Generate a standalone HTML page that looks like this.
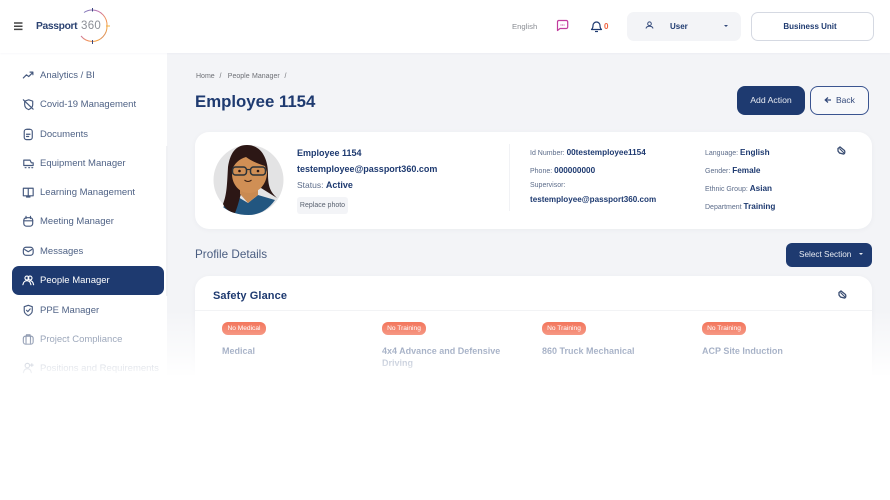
<!DOCTYPE html>
<html lang="en"><head><meta charset="utf-8"><title>Employee 1154</title>
<style>
*{box-sizing:border-box}
html,body{margin:0;padding:0;width:890px;height:500px;overflow:hidden;background:#fff}
body{font-family:"Liberation Sans",sans-serif;position:relative;color:#1e3a70}
.a{position:absolute;white-space:nowrap}
.nav{position:absolute;left:40px;font-size:9.5px;color:#4f6285;white-space:nowrap;line-height:14px}
.ic{position:absolute;left:22px;width:12.5px;height:12.5px;fill:none;stroke:#46597e;stroke-width:1.3;stroke-linecap:round;stroke-linejoin:round}
.card{position:absolute;background:#fff;border-radius:14px;box-shadow:0 1px 6px rgba(30,40,80,.04)}
.b{font-weight:bold;color:#1e3a70}
.l{color:#5c6c8a;font-size:7px;line-height:12px}
.l b{color:#1e3a70;font-size:8.2px}
.pill{position:absolute;top:322px;height:13px;background:#f05838;border-radius:6px;color:#fff;font-size:6.6px;line-height:13px;text-align:center}
.t{position:absolute;top:346px;font-size:9px;font-weight:bold;color:#1e3a70;white-space:nowrap;line-height:11.5px}
</style></head><body>

<div class="a" style="left:167px;top:53px;width:723px;height:330px;background:#f3f4f7"></div>
<div class="a" style="left:0;top:0;width:890px;height:53px;background:#fff;box-shadow:0 1px 2px rgba(30,40,80,.03)"></div>
<div class="a" style="left:166px;top:146px;width:2px;height:150px;background:#f0f1f4"></div>

<!-- header -->
<svg class="a" style="left:14px;top:22px" width="9" height="9"><path d="M0 1h8.500M0 4.200h8.500M0 7.400h8.500" stroke="#444" stroke-width="1.500"/></svg>
<div class="a" style="left:36px;top:19px;font-size:10.300px;line-height:15px;font-weight:bold;color:#2c4372;letter-spacing:-.35px">Passport</div>
<div class="a" style="left:81px;top:18px;font-size:11.500px;line-height:16px;color:#8c8f96;letter-spacing:.3px">360</div>
<svg class="a" style="left:78px;top:8px" width="32" height="37" fill="none">
<defs><linearGradient id="g" x1="0" y1="0" x2="1" y2="1"><stop offset="0" stop-color="#6b7fc0"/><stop offset=".35" stop-color="#c070b0"/><stop offset=".6" stop-color="#f09060"/><stop offset=".8" stop-color="#f0a040"/><stop offset="1" stop-color="#a060b0"/></linearGradient></defs>
<path d="M6 4.500A14.500 14.500 0 0 1 14.500 2A15 15 0 0 1 29 18A15 15 0 0 1 14.500 33.500A15 15 0 0 1 3 28" stroke="url(#g)" stroke-width="1"/>
<path d="M14.500 0v3.500M14.500 32v4" stroke="#3a4a80" stroke-width="1"/><path d="M28 18h4" stroke="#f0b040" stroke-width="1"/>
</svg>

<div class="a" style="left:512px;top:20px;font-size:7.700px;line-height:13px;color:#8a8d93">English</div>
<svg class="a" style="left:556px;top:19px" width="13" height="13" fill="none"><path d="M2.500 1.500h8a1.500 1.500 0 0 1 1.200 1.500v5a1.500 1.500 0 0 1-1.500 1.500H4L1.500 11.500V3a1.500 1.500 0 0 1 1-1.500z" stroke="#c23d9e" stroke-width="1.200" stroke-linejoin="round"/><path d="M4.500 6h4" stroke="#c23d9e" stroke-width="1" stroke-dasharray="1 .6"/></svg>
<svg class="a" style="left:590px;top:20px" width="13" height="13" fill="none"><path d="M1.500 9.500c1.200-1 1.500-2 1.500-4a3.500 3.500 0 0 1 7 0c0 2 .3 3 1.500 4z" stroke="#1e3a70" stroke-width="1.200" stroke-linejoin="round"/><path d="M5 11.500h3" stroke="#1e3a70" stroke-width="1.200"/></svg>
<div class="a" style="left:604px;top:20px;font-size:8px;line-height:13px;font-weight:bold;color:#f0603c">0</div>
<div class="a" style="left:627px;top:12px;width:114px;height:29px;background:#f3f4f7;border-radius:7px"></div>
<svg class="a" style="left:645px;top:21px" width="9" height="9" fill="none"><circle cx="4.500" cy="2.700" r="1.800" stroke="#33497a" stroke-width="1"/><path d="M1 7.500c.3-1.600 1.500-2.200 3.500-2.200s3.200.6 3.500 2.200" stroke="#33497a" stroke-width="1"/></svg>
<div class="a" style="left:670px;top:20px;font-size:8px;line-height:13px;font-weight:bold;color:#1e3a70">User</div>
<div class="a" style="left:723.500px;top:25px;border:2px solid transparent;border-top:2.500px solid #33497a;border-bottom:0"></div>
<div class="a" style="left:751px;top:12px;width:123px;height:29px;background:#fff;border:1px solid #d5d9e2;border-radius:7px;text-align:center;font-size:8px;line-height:27px;font-weight:bold;color:#1e3a70;padding-right:5px">Business Unit</div>

<!-- breadcrumb + title -->
<div class="a" style="left:196px;top:71px;font-size:7px;line-height:11px;color:#6d6f75;word-spacing:.5px">Home &nbsp;/&nbsp;&thinsp; People Manager &nbsp;/</div>
<div class="a" style="left:195px;top:91px;font-size:16.800px;line-height:21px;font-weight:bold;color:#1e3a70">Employee 1154</div>
<div class="a" style="left:737px;top:86px;width:68px;height:29px;background:#1e3a70;border-radius:8px;color:#e8ebf2;font-size:8.700px;line-height:29px;text-align:center">Add Action</div>
<div class="a" style="left:810px;top:86px;width:59px;height:29px;border:1px solid #3a5490;border-radius:8px;background:#f7f8fa;color:#33497a;font-size:8.500px;line-height:27px;padding-left:25px">Back</div>
<svg class="a" style="left:824px;top:96px" width="8" height="8" fill="none"><path d="M7 4H1.500M4 1.500L1.200 4 4 6.500" stroke="#33497a" stroke-width="1.200"/></svg>

<!-- profile card -->
<div class="card" style="left:195px;top:132px;width:677px;height:97px"></div>
<svg class="a" style="left:213px;top:144px" width="72" height="72" viewBox="0 0 72 72">
<circle cx="35.500" cy="36" r="35" fill="#e3e3e4"/>
<path d="M10 63L25 53L35 59L45 51L62 56C55 66 46 71 35.500 71C25 71 16 68 10 63Z" fill="#225680"/>
<path d="M34 1C22 1 17 10 15 23C14 40 14 50 10 60C12 65 17 68 22 69C25 62 26 56 28 50L48 44L64 54C58 48 55 44 55 30C55 14 48 1 34 1Z" fill="#2c1715"/>
<path d="M27 40L27 50L35 59L45 51L45 40Z" fill="#c98a52"/>
<path d="M19 26C21 20 26 15 33 13C38 17 46 20 52 22L54 28C54 40 46 49 36 49C26 49 19 40 19 30Z" fill="#d08f55"/>
<rect x="19.500" y="23" width="14" height="8" rx="3" fill="none" stroke="#2a3238" stroke-width="1.500"/>
<rect x="37.500" y="23" width="15" height="8" rx="3" fill="none" stroke="#2a3238" stroke-width="1.500"/>
<path d="M33.500 25.500h4" stroke="#2a3238" stroke-width="1.200"/>
<circle cx="26.500" cy="27" r="1.300" fill="#2c1715"/><circle cx="45" cy="27" r="1.300" fill="#2c1715"/>
<path d="M31.500 36c2 2 5 2 7 0" fill="none" stroke="#3a2015" stroke-width="1"/>
</svg>
<div class="a b" style="left:297px;top:147px;font-size:9px;line-height:13px">Employee 1154</div>
<div class="a b" style="left:297px;top:163px;font-size:9px;line-height:13px">testemployee@passport360.com</div>
<div class="a" style="left:297px;top:179px;font-size:8.500px;line-height:13px;color:#5c6c8a">Status: <b style="color:#1e3a70;font-size:9px">Active</b></div>
<div class="a" style="left:297px;top:197px;width:51px;height:17px;background:#f3f4f7;border-radius:3px;font-size:7px;line-height:17px;text-align:center;color:#5a6270">Replace photo</div>
<div class="a" style="left:509px;top:144px;width:1px;height:67px;background:#f1f2f5"></div>

<div class="a l" style="left:530px;top:147px">Id Number: <b>00testemployee1154</b></div>
<div class="a l" style="left:530px;top:165px">Phone: <b>000000000</b></div>
<div class="a l" style="left:530px;top:180px">Supervisor:</div>
<div class="a b" style="left:530px;top:194px;font-size:8.100px;line-height:12px">testemployee@passport360.com</div>

<div class="a l" style="left:705px;top:147px">Language: <b>English</b></div>
<div class="a l" style="left:705px;top:165px">Gender: <b>Female</b></div>
<div class="a l" style="left:705px;top:183px">Ethnic Group: <b>Asian</b></div>
<div class="a l" style="left:705px;top:201px">Department <b>Training</b></div>
<svg class="a" style="left:837px;top:146px" width="9" height="9" fill="none"><path d="M1 2.500L3 1l4.500 3.500c.5 1 .5 2 0 3L6.500 8 2.500 7 1 5z" stroke="#3a4d72" stroke-width="1.300"/><path d="M2.500 2.500L7 7" stroke="#3a4d72" stroke-width="1.100"/></svg>

<!-- profile details -->
<div class="a" style="left:195px;top:247px;font-size:11.700px;line-height:16px;color:#4a5d80">Profile Details</div>
<div class="a" style="left:786px;top:243px;width:86px;height:24px;background:#1e3a70;border-radius:6px;color:#e8ebf2;font-size:8.200px;line-height:23px;padding-left:13px">Select Section</div>
<div class="a" style="left:859px;top:253px;border:2.500px solid transparent;border-top:2.500px solid #e8ebf2;border-bottom:0"></div>

<!-- safety card -->
<div class="card" style="left:195px;top:276px;width:677px;height:110px"></div>
<div class="a b" style="left:213px;top:289px;font-size:11px;line-height:14px;letter-spacing:.1px">Safety Glance</div>
<svg class="a" style="left:838px;top:290px" width="9" height="9" fill="none"><path d="M1 2.500L3 1l4.500 3.500c.5 1 .5 2 0 3L6.500 8 2.500 7 1 5z" stroke="#3a4d72" stroke-width="1.300"/><path d="M2.500 2.500L7 7" stroke="#3a4d72" stroke-width="1.100"/></svg>
<div class="a" style="left:195px;top:310px;width:677px;height:1px;background:#f2f3f5"></div>
<div class="pill" style="left:222px;width:44px">No Medical</div>
<div class="pill" style="left:382px;width:44px">No Training</div>
<div class="pill" style="left:542px;width:44px">No Training</div>
<div class="pill" style="left:702px;width:44px">No Training</div>
<div class="t" style="left:222px">Medical</div>
<div class="t" style="left:382px">4x4 Advance and Defensive<br>Driving</div>
<div class="t" style="left:542px">860 Truck Mechanical</div>
<div class="t" style="left:702px">ACP Site Induction</div>

<!-- sidebar -->
<div class="a" style="left:12px;top:266px;width:152px;height:29px;background:#1e3a70;border-radius:7px"></div>
<svg class="ic" style="top:69px" viewBox="0 0 14 14"><path d="M1.500 10l3.500-3.500 2.500 2L12 4M9 3.500h3.200v3"/></svg>
<div class="nav" style="top:69px">Analytics / BI</div>
<svg class="ic" style="top:98px" viewBox="0 0 14 14"><path d="M3 3.500L7.500 2l4.500 1.500v4c0 3-2.500 4.500-4.500 5.500C5 12 3 10 3 7.500zM1.500 2l11 10.500"/></svg>
<div class="nav" style="top:98px">Covid-19 Management</div>
<svg class="ic" style="top:128px" viewBox="0 0 14 14"><rect x="2.500" y="1.500" width="9" height="11.500" rx="2.500"/><path d="M5.500 1.500h3M5 7h4M5 9.500h2.500"/></svg>
<div class="nav" style="top:128px">Documents</div>
<svg class="ic" style="top:157px" viewBox="0 0 14 14"><path d="M2 3.500h7l1.500 3h2v3H2zM3.500 12h1M7.500 12h1M11 12h1"/></svg>
<div class="nav" style="top:157px">Equipment Manager</div>
<svg class="ic" style="top:186px" viewBox="0 0 14 14"><path d="M1.500 2.500h11v8.500h-11zM7 2.500V11M5 12.300h4"/></svg>
<div class="nav" style="top:186px">Learning Management</div>
<svg class="ic" style="top:215px" viewBox="0 0 14 14"><rect x="2" y="3" width="10" height="9.500" rx="3"/><path d="M4.500 1.500v2.500M9.500 1.500v2.500M2 6.500h10"/></svg>
<div class="nav" style="top:215px">Meeting Manager</div>
<svg class="ic" style="top:245px" viewBox="0 0 14 14"><rect x="1.500" y="2.500" width="11" height="9" rx="3"/><path d="M3 5l4 2.500L11 5"/></svg>
<div class="nav" style="top:245px">Messages</div>
<svg class="ic" style="top:274px;stroke:#fff" viewBox="0 0 14 14"><circle cx="5.500" cy="4.500" r="2.200"/><circle cx="9" cy="4.500" r="2.200"/><path d="M1 12c.5-3 2.500-4.500 4.500-4.500S9.500 9 10 12M9 7.500c2 0 3.500 2 4 4.500"/></svg>
<div class="nav" style="top:274px;color:#fff">People Manager</div>
<svg class="ic" style="top:304px" viewBox="0 0 14 14"><path d="M2.500 3L7 1.500 11.500 3v4.500c0 2.500-2.500 4.500-4.500 5.500-2-1-4.500-3-4.500-5.500zM5 7l1.500 1.500L9.200 5.500"/></svg>
<div class="nav" style="top:304px">PPE Manager</div>
<svg class="ic" style="top:333px" viewBox="0 0 14 14"><rect x="1.500" y="3.500" width="11" height="9" rx="2.500"/><path d="M5 3.500V2h4v1.500M4.500 3.500v9M9.500 3.500v9"/></svg>
<div class="nav" style="top:333px">Project Compliance</div>
<svg class="ic" style="top:362px" viewBox="0 0 14 14"><circle cx="6" cy="4" r="2.500"/><path d="M1.500 12c.5-3 2.500-4.500 4.500-4.500s4 1.500 4.500 4.500M11 2v3M9.500 3.500h3"/></svg>
<div class="nav" style="top:362px">Positions and Requirements</div>

<!-- fade -->
<div class="a" style="left:0;top:310px;width:890px;height:66px;background:linear-gradient(to bottom,rgba(255,255,255,0) 0%,rgba(255,255,255,.45) 45%,rgba(255,255,255,.97) 100%)"></div>
<div class="a" style="left:0;top:375px;width:890px;height:125px;background:#fff"></div>
</body></html>
